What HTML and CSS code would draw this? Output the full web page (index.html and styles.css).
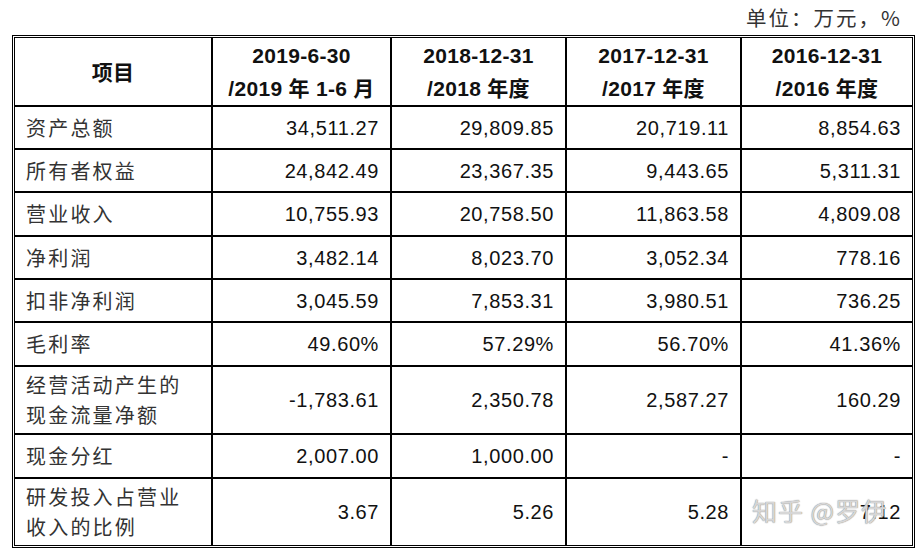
FILE: index.html
```html
<!DOCTYPE html>
<html lang="zh">
<head>
<meta charset="utf-8">
<link rel="stylesheet" href="styles.css">
</head>
<body>
<div class="page">
  <div class="unit">单位：万元，%</div>
  <div class="frame">
    <table class="fin">
      <colgroup>
        <col class="c1"><col class="c2"><col class="c3"><col class="c4"><col class="c5">
      </colgroup>
      <thead>
        <tr class="hrow">
          <th>项目</th>
          <th>2019-6-30<br>/2019 年 1-6 月</th>
          <th>2018-12-31<br>/2018 年度</th>
          <th>2017-12-31<br>/2017 年度</th>
          <th>2016-12-31<br>/2016 年度</th>
        </tr>
      </thead>
      <tbody>
        <tr class="r1"><td>资产总额</td><td>34,511.27</td><td>29,809.85</td><td>20,719.11</td><td>8,854.63</td></tr>
        <tr class="r1"><td>所有者权益</td><td>24,842.49</td><td>23,367.35</td><td>9,443.65</td><td>5,311.31</td></tr>
        <tr class="r2"><td>营业收入</td><td>10,755.93</td><td>20,758.50</td><td>11,863.58</td><td>4,809.08</td></tr>
        <tr class="r1"><td>净利润</td><td>3,482.14</td><td>8,023.70</td><td>3,052.34</td><td>778.16</td></tr>
        <tr class="r1"><td>扣非净利润</td><td>3,045.59</td><td>7,853.31</td><td>3,980.51</td><td>736.25</td></tr>
        <tr class="r2"><td>毛利率</td><td>49.60%</td><td>57.29%</td><td>56.70%</td><td>41.36%</td></tr>
        <tr class="r3"><td>经营活动产生的<br>现金流量净额</td><td>-1,783.61</td><td>2,350.78</td><td>2,587.27</td><td>160.29</td></tr>
        <tr class="r2"><td>现金分红</td><td>2,007.00</td><td>1,000.00</td><td>-</td><td>-</td></tr>
        <tr class="r4"><td>研发投入占营业<br>收入的比例</td><td>3.67</td><td>5.26</td><td>5.28</td><td>7.12</td></tr>
      </tbody>
    </table>
  </div>
  <div class="watermark">知乎 @罗伊</div>
</div>
</body>
</html>
```

FILE: styles.css
```css
html, body {
  margin: 0;
  padding: 0;
  background: #fff;
}
.page {
  position: relative;
  width: 922px;
  height: 550px;
  display: flex;
  flex-direction: column;
  font-family: "Liberation Sans", "Noto Sans CJK SC", sans-serif;
  color: #111;
}
.unit {
  height: 35px;
  box-sizing: border-box;
  padding: 3px 20px 0 0;
  text-align: right;
  font-family: "Noto Sans CJK SC", sans-serif;
  font-size: 20.5px;
  line-height: 28px;
  letter-spacing: 2px;
  color: #333;
}
.frame {
  margin-left: 12px;
  width: 903px;
  box-sizing: border-box;
  border: 1px solid #000;
  padding: 1px;
}
.fin {
  width: 897px;
  table-layout: fixed;
  border-collapse: separate;
  border-spacing: 0;
  border: 1px solid #000;
  box-sizing: content-box;
}
.c1 { width: 198px; }
.c2 { width: 179px; }
.c3 { width: 175px; }
.c4 { width: 175px; }
.c5 { width: 170px; }
.fin th, .fin td {
  box-sizing: border-box;
  border-right: 2px solid #000;
  border-bottom: 2px solid #000;
  padding: 0;
  vertical-align: middle;
}
.fin th:last-child, .fin td:last-child { border-right: none; }
.fin tbody tr:last-child td { border-bottom: none; }
.fin th {
  font-weight: bold;
  font-size: 21px;
  line-height: 33px;
  text-align: center;
  letter-spacing: 0.3px;
  padding-top: 1px;
}
.hrow th { height: 67px; }
.r1 td { height: 43px; }
.r2 td { height: 44px; }
.r3 td { height: 68px; }
.r4 td { height: 66px; }
.fin td {
  font-size: 20px;
  line-height: 30px;
  text-align: right;
  padding-right: 11px;
  letter-spacing: 0.6px;
}
.fin td:first-child {
  text-align: left;
  padding: 0 0 0 11px;
  font-family: "Noto Sans CJK SC", sans-serif;
  font-size: 20px;
  letter-spacing: 2.2px;
  color: #333;
}
.watermark {
  position: absolute;
  left: 752px;
  top: 492px;
  font-family: "Noto Sans CJK SC", sans-serif;
  font-size: 25px;
  line-height: 36px;
  letter-spacing: 1px;
  color: rgba(230, 230, 230, 0.85);
  text-shadow: 0 0 1px rgba(120, 120, 120, 0.9), 0 0 1px rgba(120, 120, 120, 0.5);
}
```
